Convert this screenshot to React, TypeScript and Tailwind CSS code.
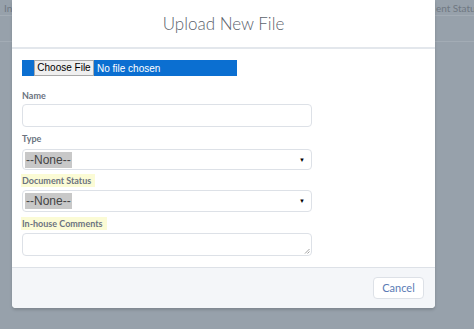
import React from "react";

const font = { fontFamily: "Lato, 'Open Sans', Arial, sans-serif" };

function Label({ text, highlight }: { text: string; highlight?: boolean }) {
  return (
    <div className="h-[12px] leading-[12px] text-[9px] font-bold text-[#6b7380]">
      <span className={highlight ? "bg-[#fbfbd5] pr-[4px] pl-[1px] -ml-[1px] py-[1px]" : ""}>{text}</span>
    </div>
  );
}

function SelectBox({ className }: { className: string }) {
  return (
    <div
      className={`flex items-center justify-between w-[290px] border border-[#dde1e7] rounded-[4px] bg-white pl-[2px] pr-[6px] ${className}`}
    >
      <span className="bg-[#c8c8c8] text-[#444] text-[12px] leading-[16px] px-[1px]" style={{ fontFamily: "'Liberation Sans', Arial, sans-serif" }}>
        --None--
      </span>
      <span className="text-[6px] text-black leading-none">▼</span>
    </div>
  );
}

export default function App() {
  return (
    <div className="relative w-[474px] h-[329px] overflow-hidden bg-[#97a1ab]" style={font}>
      {/* table header behind the backdrop */}
      <div className="h-[16px] border-b border-[#a3acb5] flex justify-between text-[10px] leading-[16px] text-[#6f7882] px-[4px]">
        <span>In</span>
        <span className="-mr-[10px] whitespace-nowrap">ent Status</span>
      </div>
      <div className="h-[26px] border-b border-[#a3acb5]" />

      {/* modal */}
      <div className="absolute left-[12px] top-0 w-[423px] rounded-b-[4px] bg-white shadow-[0_2px_3px_rgba(0,0,0,0.16)]">
        <div className="h-[49px] border-b-2 border-[#e3e7ec] flex items-center justify-center">
          <h2 className="text-[17px] font-light text-[#5c636d]">Upload New File</h2>
        </div>

        <div className="pl-[10px] pt-[11px] pb-[11px]">
          <div className="w-[215px] h-[16px] bg-[#0b6fd1] flex items-center pl-[12px]" style={{ fontFamily: "'Liberation Sans', Arial, sans-serif" }}>
            <span className="shrink-0 whitespace-nowrap h-[16px] w-[60px] bg-[#efefef] border border-[#a9a9a9] text-[10px] leading-[14px] text-black text-center">
              Choose File
            </span>
            <span className="whitespace-nowrap text-[10px] text-white ml-[3px]">No file chosen</span>
          </div>

          <div className="mt-[14px]">
            <Label text="Name" />
          </div>
          <div className="mt-[2px] w-[290px] h-[23px] border border-[#dde1e7] rounded-[4px]" />

          <div className="mt-[6px]">
            <Label text="Type" />
          </div>
          <SelectBox className="mt-[4px] h-[21px]" />

          <div className="mt-[5px]">
            <Label text="Document Status" highlight />
          </div>
          <SelectBox className="mt-[3px] h-[22px]" />

          <div className="mt-[6px]">
            <Label text="In-house Comments" highlight />
          </div>
          <div className="relative mt-[3px] w-[290px] h-[23px] border border-[#dde1e7] rounded-[4px]">
            <svg className="absolute right-[1px] bottom-[1px]" width="6" height="6" viewBox="0 0 6 6">
              <path d="M5.5 1 L1 5.5 M5.5 3.5 L3.5 5.5" stroke="#888" strokeWidth="0.8" />
            </svg>
          </div>
        </div>

        <div className="h-[41px] border-t border-[#dde1e7] bg-[#f4f6f9] rounded-b-[4px] flex items-center justify-end pr-[11px]">
          <button className="w-[51px] h-[22px] bg-white border border-[#dde1e7] rounded-[4px] text-[11px] text-[#5a7bb5]">
            Cancel
          </button>
        </div>
      </div>
    </div>
  );
}
